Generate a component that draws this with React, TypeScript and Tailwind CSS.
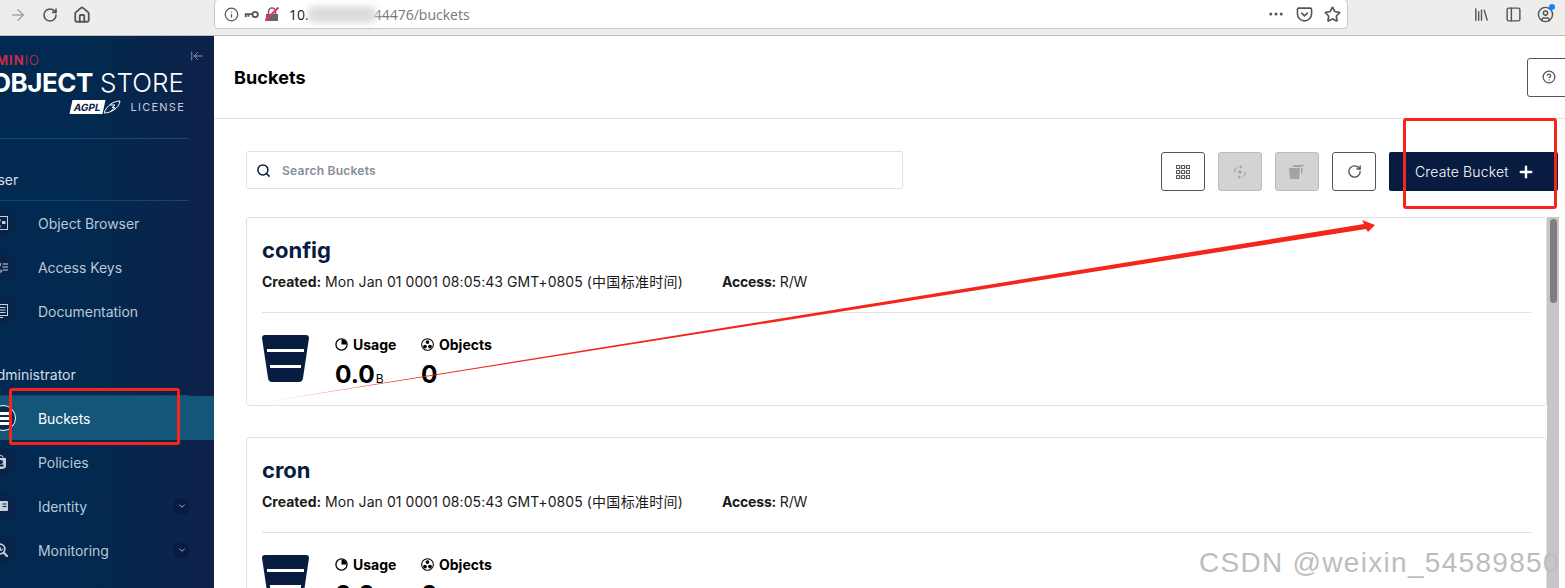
import {
  ArrowLeftToLine,
  ArrowRight,
  ChevronDown,
  CircleHelp,
  Info,
  Library,
  MoreHorizontal,
  PanelLeft,
  Plus,
  RotateCw,
  Search,
  Star,
  House,
  UserCircle,
  Pocket,
} from "lucide-react";
import type { ReactNode } from "react";

function BucketIcon({ className }: { className?: string }) {
  return (
    <svg viewBox="0 0 47 47" className={className}>
      <path d="M3 0H44Q47 0 47 3L41 43Q40.500 47 37 47H10Q6.500 47 6 43L0 3Q0 0 3 0Z" fill="#081c42" />
      <rect x="5" y="14" width="37" height="3" fill="#fff" />
      <rect x="8" y="30" width="31" height="3" fill="#fff" />
    </svg>
  );
}

function UsageIcon() {
  return (
    <svg viewBox="0 0 14 14" className="h-[13px] w-[13px]" fill="none" stroke="#000" strokeWidth="1.400">
      <circle cx="7" cy="7" r="6" />
      <path d="M7 7V1.500A5.500 5.500 0 0 1 12.500 7Z" fill="#000" stroke="none" />
    </svg>
  );
}

function ObjectsIcon() {
  return (
    <svg viewBox="0 0 14 14" className="h-[13px] w-[13px]" fill="none" stroke="#000" strokeWidth="1.100">
      <circle cx="7" cy="7" r="6.300" />
      <circle cx="7" cy="4.400" r="2" fill="#000" stroke="none" />
      <circle cx="4.300" cy="9.200" r="2" fill="#000" stroke="none" />
      <circle cx="9.700" cy="9.200" r="2" fill="#000" stroke="none" />
    </svg>
  );
}

function GridIcon() {
  const cells = [0, 5, 10];
  return (
    <svg viewBox="0 0 14 14" className="h-[14px] w-[14px]" fill="none" stroke="currentColor" strokeWidth="1.200">
      {cells.map((y) =>
        cells.map((x) => <rect key={`${x}-${y}`} x={x + 0.5} y={y + 0.5} width="3.200" height="3" rx="0.600" />),
      )}
    </svg>
  );
}

function ReplicateIcon() {
  return (
    <svg viewBox="0 0 14 14" className="h-[14px] w-[14px]" fill="none" stroke="currentColor" strokeWidth="1.300">
      <circle cx="7" cy="7" r="1.800" fill="currentColor" stroke="none" />
      <path d="M1.500 7A5.500 5.500 0 0 1 6 1.600" strokeDasharray="4 2" />
      <path d="M12.500 7A5.500 5.500 0 0 1 8 12.400" strokeDasharray="4 2" />
      <path d="M7 0L9.500 2L7 3.500ZM7 14L4.500 12L7 10.500Z" fill="currentColor" stroke="none" />
    </svg>
  );
}

function KeyGlyph() {
  return (
    <svg viewBox="0 0 16 10" className="h-[9px] w-[16px]" fill="none" stroke="currentColor">
      <circle cx="11.500" cy="5" r="3" strokeWidth="2" />
      <path d="M8 4.500H0M1 4.500V8M4 4.500V7.500" strokeWidth="2" />
    </svg>
  );
}

function NoLockGlyph() {
  return (
    <svg viewBox="0 0 14 14" className="h-[14px] w-[14px]">
      <path d="M1 7H13V14H1Z" fill="#666" />
      <path d="M3.500 7V4.500A3.500 3.500 0 0 1 10.500 4.500V7" fill="none" stroke="#666" strokeWidth="1.600" />
      <path d="M0 13.500L13.500 0.500" stroke="#ff2a55" strokeWidth="2" />
    </svg>
  );
}

const glyphs: Record<string, ReactNode> = {
  browser: (
    <>
      <rect x="0.500" y="0.500" width="13" height="13" fill="none" stroke="currentColor" />
      <rect x="3" y="3" width="3.500" height="3" fill="currentColor" />
      <rect x="8" y="5" width="3.500" height="3" fill="currentColor" />
      <rect x="3" y="9" width="3.500" height="2.500" fill="currentColor" />
    </>
  ),
  keys: (
    <>
      <circle cx="4" cy="4.500" r="2.500" fill="none" stroke="currentColor" />
      <path d="M0.500 12C0.500 8 7.500 8 7.500 12Z" fill="none" stroke="currentColor" />
      <path d="M8.500 4H14M8.500 7H14M8.500 10H14" stroke="currentColor" strokeWidth="1.200" />
    </>
  ),
  docs: (
    <>
      <rect x="1.500" y="0.500" width="12" height="11" fill="none" stroke="currentColor" />
      <path d="M3.500 3.500H11.500M3.500 6H11.500M3.500 8.500H11.500M0 13.500H9" stroke="currentColor" />
    </>
  ),
  policies: (
    <>
      <path d="M2 3H12V11Q12 14 7 14Q2 14 2 11Z" fill="currentColor" />
      <circle cx="7" cy="2.500" r="2" fill="none" stroke="currentColor" />
      <circle cx="7" cy="7" r="2" fill="#0a2349" />
      <rect x="4.500" y="9.500" width="5" height="2" fill="#0a2349" />
    </>
  ),
  identity: (
    <>
      <rect x="0" y="2" width="14" height="10" rx="1" fill="currentColor" />
      <circle cx="4" cy="6" r="1.500" fill="#0a2349" />
      <path d="M2 10H6M8.500 5H12.500M8.500 7.500H12.500" stroke="#0a2349" strokeWidth="1.200" />
    </>
  ),
  monitoring: (
    <>
      <circle cx="6" cy="6" r="4.800" fill="none" stroke="currentColor" strokeWidth="1.800" />
      <path d="M9.500 9.500L14 14" stroke="currentColor" strokeWidth="2.200" />
      <path d="M3 6H5L6 4L7 8L8 6H9" fill="none" stroke="currentColor" />
    </>
  ),
};

function NavGlyph({ name }: { name: string }) {
  return (
    <svg viewBox="0 0 14 14" className="mr-[4px] h-[14px] w-[14px]">
      {glyphs[name]}
    </svg>
  );
}

function NavItem({
  icon,
  label,
  active,
  chevron,
}: {
  icon: ReactNode;
  label: string;
  active?: boolean;
  chevron?: boolean;
}) {
  return (
    <div
      className={`flex h-[44px] w-[227px] items-center pl-[3px] text-[14px] tracking-[-0.05px] ${
        active ? "bg-[#14557a] text-white" : "text-[#b9c7d8]"
      }`}
    >
      <span
        className={`flex h-[26px] w-[26px] shrink-0 items-center justify-center rounded-full ${
          active ? "border border-white bg-[#0a2a4f] text-white" : "bg-[#0a2349] text-[#c5d0de]"
        }`}
      >
        {icon}
      </span>
      <span className="ml-[22px] flex-1">{label}</span>
      {chevron && (
        <span className="mr-[25px] flex h-[15px] w-[15px] items-center justify-center rounded-sm bg-[#091c3f]">
          <ChevronDown size={10} className="text-[#b9c7d8]" />
        </span>
      )}
    </div>
  );
}

function SectionTitle({ children }: { children: string }) {
  return (
    <div className="flex h-[44px] w-[202px] items-center border-b border-[#0f4a75] pt-[2px] text-[14px] text-[#d5dde7]">
      {children}
    </div>
  );
}

function Sidebar() {
  return (
    <aside className="h-full w-[214px] shrink-0 overflow-hidden bg-gradient-to-r from-[#02294f] from-40% to-[#0d2149]">
      <div className="-ml-[13px]">
        <div className="relative h-[103px] w-[202px] border-b border-[#0f4a75]">
          <ArrowLeftToLine size={14} strokeWidth={1.400} className="absolute top-[13px] -right-[15px] text-[#9fb0c2]" />
          <div className="pt-[18px] pl-[9px] text-[13px] leading-[13px] tracking-[1px] text-[#c72c48]">
            <span className="font-bold">MIN</span>
            <span className="font-light">IO</span>
          </div>
          <div className="mt-[1px] mr-[5px] -ml-[9px] whitespace-nowrap text-right text-[26px] leading-[30px] text-white">
            <span className="font-bold tracking-[-0.5px]">OBJECT</span>{" "}
            <span className="font-light">STORE</span>
          </div>
          <div className="mt-[1px] mr-[4px] flex items-center justify-end">
            <span className="flex h-[14px] w-[33px] -skew-x-12 items-center justify-center bg-white text-[10px] leading-none font-bold text-[#0d2149]">
              AGPL
            </span>
            <svg viewBox="0 0 17 14" className="h-[14px] w-[17px]" fill="none" stroke="#fff" strokeWidth="1">
              <path d="M0 13C6 13 15 9 16 1C10 1 3 5 0 13Z" />
              <path d="M6 5H11L8 7.500H11L7 11" />
            </svg>
            <span className="ml-[9px] text-[11px] tracking-[1.250px] text-[#c3cfdc]">LICENSE</span>
          </div>
        </div>
        <div className="mt-[18px]">
          <SectionTitle>User</SectionTitle>
          <NavItem icon={<NavGlyph name="browser" />} label="Object Browser" />
          <NavItem icon={<NavGlyph name="keys" />} label="Access Keys" />
          <NavItem icon={<NavGlyph name="docs" />} label="Documentation" />
        </div>
        <div className="mt-[19px]">
          <SectionTitle>Administrator</SectionTitle>
          <NavItem
            active
            icon={
              <span className="flex w-[14px] flex-col gap-[2px]">
                <span className="h-[3px] bg-white" />
                <span className="h-[3px] bg-white" />
                <span className="h-[3px] bg-white" />
              </span>
            }
            label="Buckets"
          />
          <NavItem icon={<NavGlyph name="policies" />} label="Policies" />
          <NavItem chevron icon={<NavGlyph name="identity" />} label="Identity" />
          <NavItem chevron icon={<NavGlyph name="monitoring" />} label="Monitoring" />
        </div>
      </div>
    </aside>
  );
}

function BucketCard({ name }: { name: string }) {
  return (
    <div className="mb-[31px] h-[189px] w-[1301px] shrink-0 rounded-[3px] border border-[#e2e2e2] bg-white px-[15px] pt-[16px]">
      <div className="text-[22px] leading-[32px] font-bold text-[#081c42]">{name}</div>
      <div className="mt-[5px] flex h-[20px] items-center text-[14px] text-[#1a1a1a]">
        <span className="w-[460px] whitespace-nowrap">
          <b>Created:</b> <span className="tracking-[0.06px]">Mon Jan 01 0001 08:05:43 GMT+0805</span>{" "}
          <span className="tracking-[0.3px]">(中国标准时间)</span>
        </span>
        <span className="tracking-[-0.18px]">
          <b>Access:</b> R/W
        </span>
      </div>
      <div className="mt-[21px] border-t border-[#e2e2e2] pt-[22px]">
        <div className="flex">
          <BucketIcon className="h-[47px] w-[47px]" />
          <div className="ml-[26px] w-[86px]">
            <div className="flex h-[18px] items-center gap-[5px] text-[14px] font-bold">
              <UsageIcon /> Usage
            </div>
            <div className="mt-[6px] text-[24.500px] leading-[30px] font-bold">
              0.0<span className="ml-[1px] text-[12px] font-normal">B</span>
            </div>
          </div>
          <div>
            <div className="flex h-[18px] items-center gap-[5px] text-[14px] font-bold">
              <ObjectsIcon /> Objects
            </div>
            <div className="mt-[6px] text-[24.500px] leading-[30px] font-bold">0</div>
          </div>
        </div>
      </div>
    </div>
  );
}

function ToolButton({ children, disabled }: { children: ReactNode; disabled?: boolean }) {
  return (
    <button
      type="button"
      className={`flex h-[39px] w-[44px] items-center justify-center rounded-[3px] border ${
        disabled ? "border-[#bbbbbb] bg-[#d2d3d3] text-[#a3a3a3]" : "border-[#555] bg-white text-[#555]"
      }`}
    >
      {children}
    </button>
  );
}

function BrowserBar() {
  return (
    <div className="flex h-[36px] shrink-0 items-start border-b border-[#bdbdbd] bg-[#ededec] font-['Open_Sans',sans-serif] text-[#555]">
      <div className="flex h-[29px] w-[214px] shrink-0 items-center pl-[9px]">
        <ArrowRight size={18} className="text-[#a5a5a5]" />
        <RotateCw size={16} className="ml-[15px]" strokeWidth={2.400} />
        <House size={18} className="ml-[15px]" strokeWidth={2.400} />
      </div>
      <div className="-mt-[1px] flex h-[30px] w-[1134px] shrink-0 items-center rounded-[4px] border border-[#c8c8c8] bg-white pl-[9px]">
        <Info size={15} />
        <span className="ml-[5px]">
          <KeyGlyph />
        </span>
        <span className="ml-[5px]">
          <NoLockGlyph />
        </span>
        <span className="relative ml-[10px] flex w-[200px] text-[14px]">
          <span className="text-[#111]">10.</span>
          <span className="ml-[65px] text-[#777]">44476/buckets</span>
          <span className="absolute top-[2px] left-[18px] h-[17px] w-[70px] rounded-full bg-[#dcdcdc] blur-[3px]" />
        </span>
        <span className="flex-1" />
        <MoreHorizontal size={18} />
        <Pocket size={17} className="ml-[11px]" strokeWidth={2.200} />
        <Star size={17} className="mr-[6px] ml-[11px]" strokeWidth={2.400} />
      </div>
      <div className="flex h-[29px] flex-1 items-center justify-end pr-[11px]">
        <Library size={17} />
        <PanelLeft size={17} className="ml-[15px]" />
        <span className="relative ml-[15px]">
          <UserCircle size={17} />
          <span className="absolute -top-[2px] -right-[1px] h-[6px] w-[6px] rounded-full bg-[#0a84ff]" />
        </span>
      </div>
    </div>
  );
}

export default function App() {
  return (
    <div className="relative flex h-[588px] w-[1565px] flex-col overflow-hidden bg-white font-['Inter','Noto_Sans_CJK_SC',sans-serif] text-black">
      <BrowserBar />
      <div className="flex min-h-0 flex-1">
        <Sidebar />
        <main className="min-w-0 flex-1 overflow-hidden">
          {/* PAGE HEADER */}
          <header className="flex h-[83px] items-center justify-between border-b border-[#e2e2e2] pl-[20px]">
            <h1 className="text-[18px] font-bold tracking-[0.1px]">Buckets</h1>
            <button
              type="button"
              className="-mr-[4px] flex h-[39px] w-[42px] items-center justify-center rounded-l-[3px] border border-[#555] bg-white pl-[2px] text-[#555]"
            >
              <CircleHelp size={14} strokeWidth={2.200} />
            </button>
          </header>

          {/* TOOLBAR */}
          <div className="mt-[32px] flex items-start pl-[32px]">
            <div className="flex h-[38px] w-[657px] items-center rounded-[2px] border border-[#e2e2e2] pt-[1px] pl-[9px] text-[12px] font-semibold tracking-[0.25px] text-[#848c99]">
              <Search size={15} strokeWidth={2.400} className="text-[#081c42]" />
              <span className="ml-[11px]">Search Buckets</span>
            </div>
            <div className="mt-[1px] ml-[258px] flex gap-[13px]">
              <ToolButton>
                <GridIcon />
              </ToolButton>
              <ToolButton disabled>
                <ReplicateIcon />
              </ToolButton>
              <ToolButton disabled>
                <svg viewBox="0 0 16 14" className="h-[14px] w-[16px]" fill="currentColor">
                  <path d="M0 3H11L10 14H1Z" />
                  <path d="M3 1H13V2H3ZM5 0H15V1H5ZM12 3H14L13 9H12Z" />
                </svg>
              </ToolButton>
              <ToolButton>
                <RotateCw size={15} strokeWidth={2.200} />
              </ToolButton>
              <button
                type="button"
                className="flex h-[39px] w-[169px] items-center rounded-[2px] bg-[#081c42] pl-[26px] text-[14px] font-light tracking-[0.15px] text-white"
              >
                Create Bucket
                <Plus size={18} strokeWidth={3.200} className="ml-[8px]" />
              </button>
            </div>
          </div>

          {/* BUCKET LIST */}
          <div className="mt-[26px] flex h-[400px] pl-[32px]">
            <div className="flex flex-col">
              <BucketCard name="config" />
              <BucketCard name="cron" />
            </div>
            <div className="flex h-full w-[12px] justify-center bg-[#c6c6c6] pt-[2px]">
              <div className="h-[84px] w-[7px] rounded-full bg-[#7f7f7f]" />
            </div>
          </div>
        </main>
      </div>

      {/* ANNOTATIONS */}
      <div className="absolute top-[388px] left-[9px] h-[57px] w-[171px] rounded-[3px] border-[3px] border-[#f5251b]" />
      <div className="absolute top-[118px] left-[1403px] h-[91px] w-[154px] rounded-[3px] border-[3px] border-[#f5251b]" />
      <svg className="absolute top-0 left-0 h-[588px] w-[1565px]" viewBox="0 0 1565 588" fill="none">
        <defs>
          <linearGradient id="arrow-fade" x1="246" y1="405" x2="1375" y2="225" gradientUnits="userSpaceOnUse">
            <stop offset="0" stopColor="#f5251b" stopOpacity="0.2" />
            <stop offset="0.12" stopColor="#f5251b" />
            <stop offset="1" stopColor="#f5251b" />
          </linearGradient>
        </defs>
        <polygon points="246,405 1364,224 1362,220 1375,225 1368,232 1366,229" fill="url(#arrow-fade)" />
      </svg>
      <div className="absolute top-[542px] left-[1199px] font-['Liberation_Sans',sans-serif] text-[28px] tracking-[1.300px] whitespace-nowrap text-[#bdbdbd]">
        CSDN @weixin_54589850
      </div>
    </div>
  );
}
